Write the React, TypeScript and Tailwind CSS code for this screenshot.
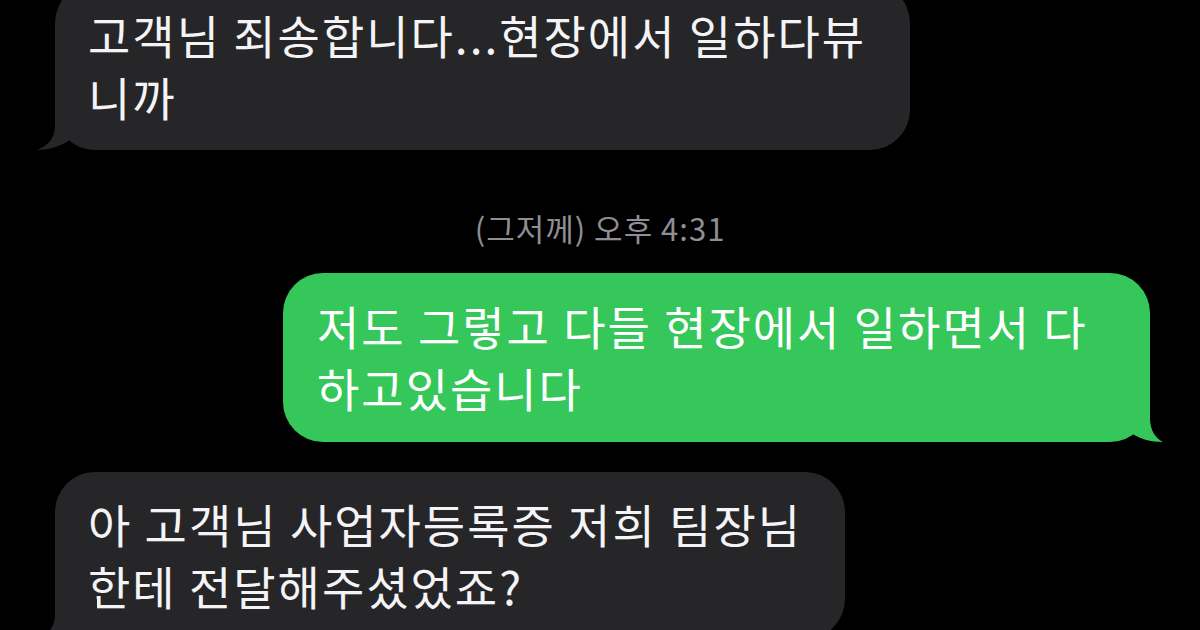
const FONT = { fontFamily: '"Noto Sans CJK KR", "Noto Sans", sans-serif' };

function LeftTail({ color }: { color: string }) {
  return (
    <svg
      className="absolute bottom-0 left-[-18px]"
      width="60"
      height="40"
      viewBox="0 0 60 40"
    >
      <path
        d="M18 0 L18 16 C18 28 11 36 0 40 C12 40 24 36 33 30 C40 36 48 40 60 40 L60 0 Z"
        fill={color}
      />
    </svg>
  );
}

function RightTail({ color }: { color: string }) {
  return (
    <svg
      className="absolute bottom-0 right-[-13px] -scale-x-100"
      width="60"
      height="40"
      viewBox="0 0 60 40"
    >
      <path
        d="M13 0 L13 16 C13 28 8 36 0 40 C12 40 24 37 33 30 C40 36 48 40 60 40 L60 0 Z"
        fill={color}
      />
    </svg>
  );
}

function Received({
  lines,
  width,
  className,
}: {
  lines: string[];
  width: string;
  className?: string;
}) {
  return (
    <div
      className={`relative ml-[55px] rounded-[40px] bg-[#262629] pl-[33px] pt-[20px] pb-[23px] ${width} ${className ?? ""}`}
    >
      {lines.map((l) => (
        <div
          key={l}
          className="whitespace-nowrap text-[46px] leading-[62px] tracking-[2px] text-[#f4f4f6]"
        >
          {l}
        </div>
      ))}
      <LeftTail color="#262629" />
    </div>
  );
}

export default function App() {
  return (
    <div
      className="h-[630px] w-[1200px] overflow-hidden bg-black"
      style={FONT}
    >
      <Received
        className="-mt-[17px]"
        width="w-[855px]"
        lines={["고객님 죄송합니다...현장에서 일하다뷰", "니까"]}
      />

      <div className="mt-[60px] text-center text-[31px] leading-[36px] tracking-[1px] text-[#8e8e93]">
        (그저께) 오후 4:31
      </div>

      <div className="mt-[27px] flex justify-end pr-[50px]">
        <div className="relative w-[867px] rounded-[40px] bg-[#35c759] pl-[34px] pt-[21px] pb-[24px]">
          <div className="whitespace-nowrap text-[46px] leading-[62px] tracking-[2px] text-white">
            저도 그렇고 다들 현장에서 일하면서 다
          </div>
          <div className="whitespace-nowrap text-[46px] leading-[62px] tracking-[2px] text-white">
            하고있습니다
          </div>
          <RightTail color="#35c759" />
        </div>
      </div>

      <Received
        className="mt-[30px]"
        width="w-[790px]"
        lines={["아 고객님 사업자등록증 저희 팀장님", "한테 전달해주셨었죠?"]}
      />
    </div>
  );
}
